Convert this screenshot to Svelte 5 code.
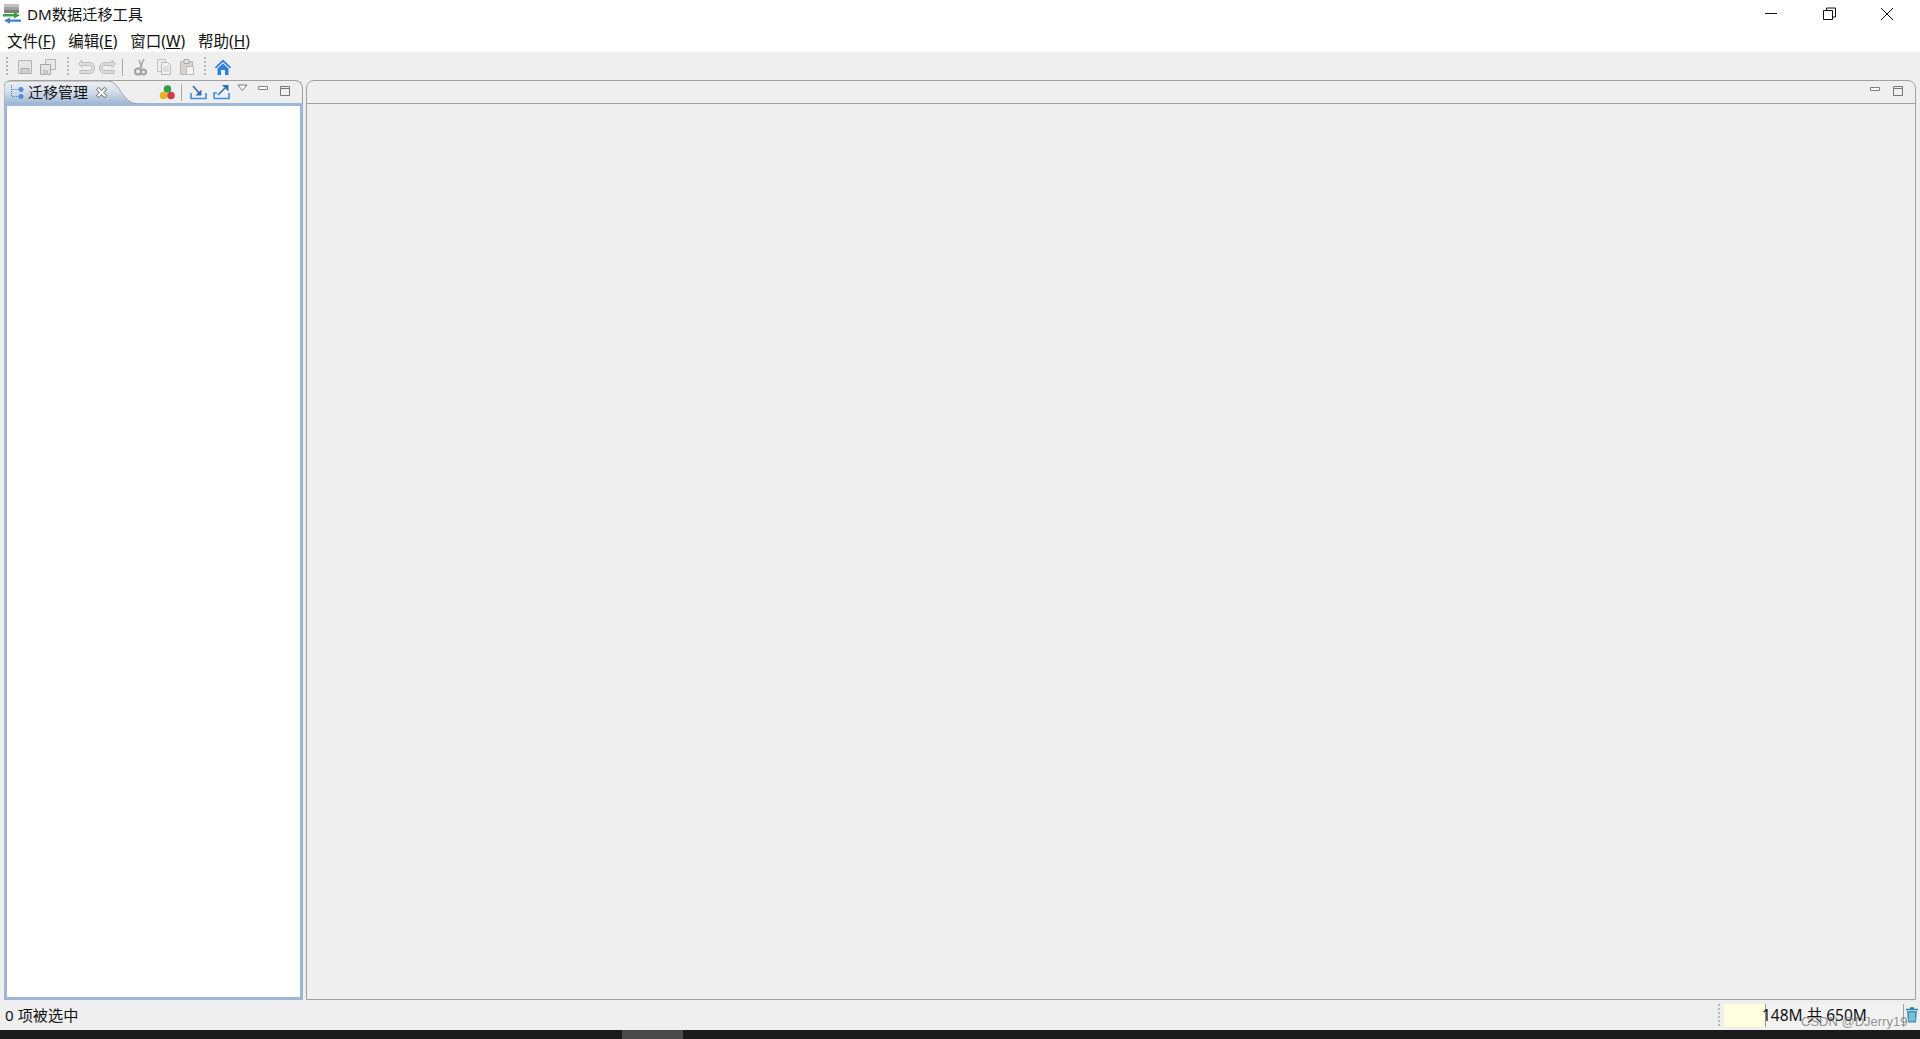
<script>
  const menus = [
    { label: '文件(', key: 'F' },
    { label: '编辑(', key: 'E' },
    { label: '窗口(', key: 'W' },
    { label: '帮助(', key: 'H' }
  ];
  const usedMb = 148;
  const totalMb = 650;
</script>

<div class="app">
  <header class="titlebar">
    <svg class="app-icon" width="20" height="20" viewBox="0 0 20 20">
      <rect x="2" y="0" width="15" height="3" fill="#c2c2c2" />
      <rect x="2" y="3" width="15" height="3" fill="#a0a0a0" />
      <rect x="2" y="6" width="15" height="3" fill="#7d7d7d" />
      <path d="M1 10h11V8l6 3.200-6 3.300V12.500H1z" fill="#3f9b3f" />
      <path d="M19 15.500H8V13.500l-6 3 6 3.300v-2h11z" fill="#3c82c8" />
    </svg>
    <span class="app-title">DM数据迁移工具</span>
    <div class="win-buttons">
      <svg width="58" height="28" viewBox="0 0 58 28"><path d="M23 13.500h12" stroke="#111" fill="none" /></svg>
      <svg width="58" height="28" viewBox="0 0 58 28">
        <path d="M23.500 10.500h9v9h-9zM26.500 10.500v-2.500h9v9h-3" stroke="#111" fill="none" />
      </svg>
      <svg width="58" height="28" viewBox="0 0 58 28"><path d="M23 8l12 12M35 8L23 20" stroke="#111" fill="none" /></svg>
    </div>
  </header>

  <nav class="menubar">
    {#each menus as m}
      <span class="menu">{m.label}<u>{m.key}</u>)</span>
    {/each}
  </nav>

  <div class="toolbar">
    <span class="grip"></span>
    <svg class="tool" width="18" height="18" viewBox="0 0 18 18">
      <path d="M2.500 2.500h13v13h-13z" fill="#e6e6e6" stroke="#b4b4b4" />
      <path d="M5 10.500h8v5H5z" fill="#cfcfcf" stroke="#aaa" />
    </svg>
    <svg class="tool" width="18" height="18" viewBox="0 0 18 18">
      <path d="M6.500 1.500h10v10h-10z" fill="#e8e8e8" stroke="#b4b4b4" />
      <path d="M1.500 6.500h10v10h-10z" fill="#e4e4e4" stroke="#a8a8a8" />
      <path d="M4 12h5v4.500H4z" fill="#c8c8c8" />
    </svg>
    <span class="grip after-tools"></span>
    <svg class="tool tight" width="18" height="18" viewBox="0 0 18 18">
      <path d="M5 2L1.500 6 5 9.500V7.500h7c2 0 3 1 3 2.500s-1 2.500-3 2.500H3v3h9c4 0 5.500-2.500 5.500-5.500S16 4.500 12 4.500H5z" fill="#dcdcdc" stroke="#bdbdbd" />
    </svg>
    <svg class="tool" width="18" height="18" viewBox="0 0 18 18">
      <path d="M13 2l3.500 4L13 9.500V7.500H6c-2 0-3 1-3 2.500s1 2.500 3 2.500h9v3H6c-4 0-5.500-2.500-5.500-5.500S2 4.500 6 4.500h7z" fill="#dcdcdc" stroke="#bdbdbd" />
    </svg>
    <span class="sep"></span>
    <svg class="tool" width="18" height="18" viewBox="0 0 18 18">
      <path d="M12 1L8 10M7 2l3 8" stroke="#a8a8a8" stroke-width="1.500" fill="none" />
      <circle cx="6" cy="13.500" r="3" fill="none" stroke="#a0a0a0" stroke-width="2" />
      <circle cx="11.500" cy="14" r="2.500" fill="none" stroke="#a0a0a0" stroke-width="2" />
    </svg>
    <svg class="tool" width="18" height="18" viewBox="0 0 18 18">
      <path d="M2.500 1.500h8v12h-8z" fill="#efefef" stroke="#c0c0c0" />
      <path d="M6.500 4.500h6l3 3v9h-9z" fill="#f2f2f2" stroke="#b8b8b8" />
      <path d="M8 9h6M8 11h6M8 13h6" stroke="#c8c8c8" />
    </svg>
    <svg class="tool" width="18" height="18" viewBox="0 0 18 18">
      <path d="M2.500 3.500h12v13h-12z" fill="#d8d5ce" stroke="#b8b5ae" />
      <path d="M6 1.500h5v4H6z" fill="#e4e4e4" stroke="#aaa" />
      <path d="M8.500 8.500h7v8h-7z" fill="#f4f4f4" stroke="#bbb" />
    </svg>
    <span class="grip after-paste"></span>
    <svg class="tool" width="18" height="18" viewBox="0 0 18 18">
      <path d="M9 1.500L.8 9.300l1.200 1.200L9 4l7 6.500 1.200-1.200z" fill="#2f80d8" />
      <path d="M3.500 10.500L9 5.500l5.500 5V17H11v-5H7v5H3.500z" fill="#2f80d8" />
    </svg>
  </div>

  <main class="workbench">
    <section class="pane left">
      <div class="pane-head">
        <div class="tab">
          <svg class="tab-shape" width="134" height="24" viewBox="0 0 134 24" preserveAspectRatio="none">
            <defs>
              <linearGradient id="tabfill" x1="0" x2="0" y1="0" y2="1">
                <stop offset="0" stop-color="#eff0f2" />
                <stop offset="0.45" stop-color="#d5dfeb" />
                <stop offset="1" stop-color="#9db6d4" />
              </linearGradient>
            </defs>
            <path d="M0 24V7Q0 1 6 1H104C116 1 118 24 134 24Z" fill="url(#tabfill)" />
            <path d="M0 24V7Q0 1 6 1H104C116 1 118 24 134 24" fill="none" stroke="#a0a0a0" />
          </svg>
          <svg class="tab-icon" width="16" height="16" viewBox="0 0 16 16">
            <path d="M2.500 1v11.500h8M2.500 5.500h8" stroke="#3a7fd0" stroke-dasharray="1 1" fill="none" />
            <circle cx="12" cy="5.500" r="2.500" fill="#4a90d9" />
            <circle cx="12" cy="12.500" r="2.500" fill="#4a90d9" />
          </svg>
          <span class="tab-label">迁移管理</span>
          <svg class="tab-close" width="13" height="13" viewBox="0 0 12 12">
            <path d="M2 2l8 8M10 2l-8 8" stroke="#7a7a7a" stroke-width="3.500" />
            <path d="M2.500 2.500l7 7M9.500 2.500l-7 7" stroke="#fff" stroke-width="1.800" />
          </svg>
        </div>
        <div class="pane-tools">
          <svg width="17" height="17" viewBox="0 0 17 17">
            <circle cx="8.500" cy="5" r="3.800" fill="#2f9e44" />
            <circle cx="4.500" cy="11.500" r="3.800" fill="#e6b422" />
            <circle cx="12" cy="11.500" r="3.800" fill="#d13a4a" />
          </svg>
          <span class="sep short"></span>
          <svg width="17" height="16" viewBox="0 0 17 16">
            <path d="M1 9v5.500h15V9" fill="none" stroke="#3d8ddc" stroke-width="1.600" />
            <path d="M3 2l7 8" stroke="#2f6fb5" stroke-width="1.600" />
            <path d="M11.500 5.500v6h-6z" fill="#2f6fb5" />
          </svg>
          <svg width="17" height="16" viewBox="0 0 17 16">
            <path d="M1 14.500h15V9M1 14.500V9h3" fill="none" stroke="#3d8ddc" stroke-width="1.600" />
            <path d="M5 11l7-7" stroke="#2f6fb5" stroke-width="1.600" />
            <path d="M9 1h6.500v6.500z" fill="#2f6fb5" />
          </svg>
          <svg class="raised menu-arrow" width="11" height="8" viewBox="0 0 11 8"><path d="M1 1h9L5.500 6.500z" fill="#fff" stroke="#777" /></svg>
          <svg class="raised" width="11" height="6" viewBox="0 0 11 6"><path d="M.5 1.500h9v3h-9z" fill="#fff" stroke="#808080" /></svg>
          <svg class="mini-max" width="11" height="11" viewBox="0 0 11 11">
            <path d="M.5.500h9v9h-9z" fill="none" stroke="#777" /><path d="M.5 2.500h9" stroke="#777" />
          </svg>
        </div>
      </div>
      <div class="view-body"></div>
    </section>

    <section class="pane right">
      <div class="pane-head editor">
        <svg width="11" height="6" viewBox="0 0 11 6"><path d="M.5 1.500h9v3h-9z" fill="#fff" stroke="#808080" /></svg>
        <svg width="11" height="11" viewBox="0 0 11 11">
          <path d="M.5.500h9v9h-9z" fill="none" stroke="#777" /><path d="M.5 2.500h9" stroke="#777" />
        </svg>
      </div>
    </section>
  </main>

  <footer class="statusbar">
    <span class="status-text">0 项被选中</span>
    <span class="grip status-grip"></span>
    <div class="heap">
      <div class="heap-used" style="width: {(usedMb / totalMb) * 100}%"></div>
      <span class="heap-text">{usedMb}M 共 {totalMb}M</span>
    </div>
    <svg class="trash" width="14" height="16" viewBox="0 0 14 16">
      <path d="M1 2.500h12M5 1h4" stroke="#2e7fa8" stroke-width="1.500" />
      <path d="M2 4h10l-1 11.500H3z" fill="#3f94bf" />
      <path d="M5 5.500v8.500M7 5.500v8.500M9 5.500v8.500" stroke="#bfe0ef" />
    </svg>
  </footer>

  <div class="taskbar"><span class="task-active"></span><span class="clock">14:35</span></div>
  <span class="watermark">CSDN @DJerry19</span>
</div>

<style>
  :global(body) {
    margin: 0;
    background: #efefef;
  }

  .app {
    position: relative;
    display: flex;
    flex-direction: column;
    height: 1039px;
    overflow: hidden;
    font-family: 'Noto Sans', 'Noto Sans CJK SC', sans-serif;
    color: #111;
  }

  .titlebar {
    display: flex;
    align-items: center;
    height: 28px;
    background: #fff;
    padding-left: 2px;
  }

  .app-icon {
    margin-right: 5px;
    filter: blur(0.5px);
  }

  .app-title {
    font-size: 15.2px;
    line-height: 28px;
  }

  .win-buttons {
    display: flex;
    margin-left: auto;
    padding-right: 4px;
  }

  .menubar {
    display: flex;
    align-items: center;
    gap: 13px;
    height: 24px;
    background: #fff;
    padding: 1px 0 0 7px;
    box-sizing: border-box;
  }

  .menu {
    font-size: 15.5px;
    line-height: 24px;
  }

  .toolbar {
    display: flex;
    align-items: center;
    box-sizing: border-box;
    height: 28px;
    padding: 2px 0 0 6px;
    background: #efefef;
  }

  .grip {
    width: 2px;
    height: 20px;
    margin-right: 8px;
    background: repeating-linear-gradient(to bottom, #b8b8b8 0 2px, transparent 2px 4px);
  }

  .after-tools {
    margin-left: 5px;
  }

  .after-paste {
    margin-left: 3px;
  }

  .tool {
    margin-right: 5px;
  }

  .tool.tight {
    margin-right: 4px;
  }

  .sep {
    width: 1px;
    height: 17px;
    background: #a8a8a8;
    margin-right: 9px;
  }

  .sep.short {
    margin: 0 2px 0 -1px;
  }

  .workbench {
    display: flex;
    flex: 1;
    gap: 3px;
    padding: 0 4px;
    min-height: 0;
  }

  .pane {
    display: flex;
    flex-direction: column;
    box-sizing: border-box;
    border: 1px solid #a0a0a0;
    border-radius: 8px 8px 0 0;
  }

  .pane.left {
    width: 299px;
    border-bottom: none;
  }

  .pane.right {
    flex: 1;
  }

  .pane-head {
    display: flex;
    align-items: center;
    height: 22px;
    flex-shrink: 0;
  }

  .pane-head.editor {
    justify-content: flex-end;
    gap: 12px;
    padding-right: 11px;
    border-bottom: 1px solid #a0a0a0;
  }

  .pane-head.editor svg:first-child {
    margin-top: -6px;
  }

  .pane-head.editor svg:last-child {
    margin-top: -2px;
  }

  .tab {
    position: relative;
    display: flex;
    align-items: center;
    width: 134px;
    height: 22px;
    padding-left: 4px;
    box-sizing: border-box;
  }

  .tab-shape {
    position: absolute;
    left: -1px;
    top: -1px;
  }

  .tab-icon,
  .tab-label,
  .tab-close {
    position: relative;
  }

  .tab-icon {
    margin-right: 3px;
  }

  .tab-label {
    font-size: 15px;
    line-height: 22px;
  }

  .tab-close {
    margin-left: 7px;
  }

  .pane-tools {
    display: flex;
    align-items: center;
    margin-left: auto;
    padding-right: 11px;
    gap: 6px;
  }

  .raised {
    margin-top: -8px;
  }

  .menu-arrow {
    margin: -8px 4px 0 1px;
  }

  .mini-max {
    margin: -2px 0 0 5px;
  }

  .view-body {
    flex: 1;
    background: #fff;
    border: 3px solid #9db6d4;
    margin: 0 -1px;
  }

  .statusbar {
    display: flex;
    align-items: center;
    height: 30px;
    padding-left: 5px;
    flex-shrink: 0;
  }

  .status-text {
    font-size: 15.2px;
    line-height: 30px;
  }

  .status-grip {
    margin-left: auto;
    margin-right: 4px;
    height: 22px;
  }

  .heap {
    position: relative;
    width: 179px;
    height: 23px;
    border-right: 1px solid #a0a0a0;
    background: #f2f2f2;
    margin-top: 1px;
  }

  .heap-used {
    position: absolute;
    left: 0;
    top: 0;
    bottom: 0;
    background: #ffffe0;
    border-right: 1px solid #999;
  }

  .heap-text {
    position: absolute;
    left: 38px;
    top: 0;
    font-size: 15.5px;
    line-height: 23px;
    white-space: nowrap;
  }

  .trash {
    margin: 0 1px;
  }

  .taskbar {
    position: relative;
    height: 9px;
    background: #1b1b1b;
    flex-shrink: 0;
    overflow: hidden;
  }

  .task-active {
    position: absolute;
    left: 622px;
    top: 0;
    width: 61px;
    height: 9px;
    background: #4a4a4a;
  }

  .clock {
    position: absolute;
    left: 1790px;
    top: 5px;
    color: #eee;
    font-size: 13px;
    line-height: 16px;
  }

  .watermark {
    position: absolute;
    left: 1801px;
    top: 1013px;
    font-family: 'Liberation Sans', sans-serif;
    font-size: 13px;
    line-height: 18px;
    color: rgba(110, 110, 110, 0.75);
    white-space: nowrap;
  }
</style>
